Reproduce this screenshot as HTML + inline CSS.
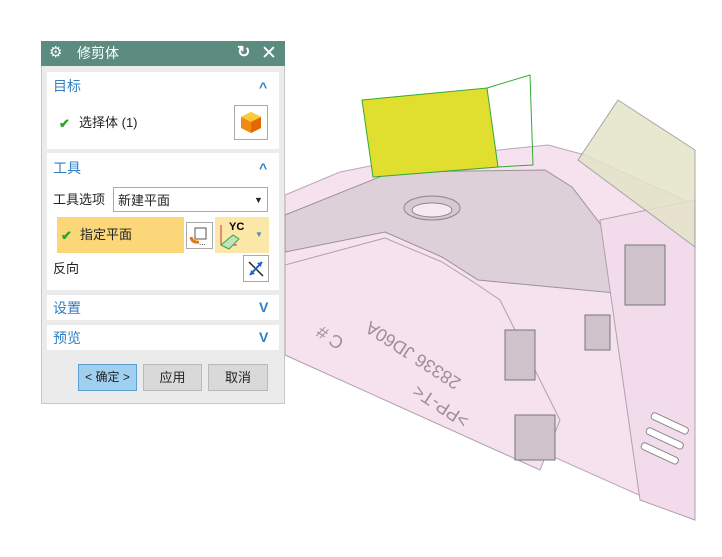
<!DOCTYPE html>
<html><head><meta charset="utf-8"><style>
body{margin:0;width:722px;height:557px;background:#fff;position:relative;overflow:hidden;font-family:"Liberation Sans","Noto Sans CJK SC",sans-serif;font-size:13px;line-height:1;color:#222}
.a{position:absolute}
.dlg{left:41px;top:41px;width:244px;height:363px;background:#ebebeb;border:1px solid #c8c8c8;box-sizing:border-box}
.title{left:41px;top:41px;width:244px;height:25px;background:#5c8b80;color:#fff}
.sec{background:#fff;left:47px;width:232px}
.hd{color:#2f7fc1;font-size:14px}
.car{color:#2f7fc1;font-weight:bold;font-size:14px}
.btn{background:#d9d9d9;border:1px solid #b9b9b9;text-align:center;line-height:25px;height:25px;box-sizing:border-box}
</style></head><body>
<svg class="a" style="left:0;top:0" width="722" height="557">
<polygon points="285,195 340,172 400,160 548,145 585,155 695,205 695,520 285,337" fill="#f6e2ef" stroke="#b8a8b4"/>
<polygon points="285,215 392,172 545,170 572,187 618,247 615,293 478,280 442,257 385,232 285,252" fill="#ddd0d8" stroke="#9c909a"/>
<polygon points="285,265 385,238 442,262 478,285 500,300 560,420 540,470 285,355" fill="#f6e2ef" stroke="#b0a0ac"/>
<polygon points="600,220 695,200 695,520 640,500" fill="#f2dceb" stroke="#b0a0ac"/>
<ellipse cx="432" cy="208" rx="28" ry="12" fill="#d8c8d2" stroke="#888"/>
<ellipse cx="432" cy="210" rx="20" ry="7" fill="#f8e8f2" stroke="#888"/>
<polygon points="618,100 695,150 695,247 578,160" fill="#e4e4c8" opacity=".85" stroke="#999"/>
<polygon points="362,100 487,88 498,167 373,177" fill="#e0de2e" stroke="#3a3"/>
<polyline points="487,88 530,75 533,165 498,167" fill="none" stroke="#3a3"/>
<rect x="625" y="245" width="40" height="60" fill="#cfc2cb" stroke="#777"/>
<rect x="505" y="330" width="30" height="50" fill="#cfc2cb" stroke="#777"/>
<rect x="585" y="315" width="25" height="35" fill="#cfc2cb" stroke="#777"/>
<rect x="515" y="415" width="40" height="45" fill="#cfc2cb" stroke="#777"/>
<g stroke="#888" fill="#fff"><rect x="650" y="420" width="40" height="7" rx="3" transform="rotate(25 670 423)"/><rect x="645" y="435" width="40" height="7" rx="3" transform="rotate(25 665 438)"/><rect x="640" y="450" width="40" height="7" rx="3" transform="rotate(25 660 453)"/></g>
<g fill="#9c8e98" font-size="18" font-family="Liberation Sans"><text transform="translate(462,380) rotate(213)">28336 JD60A</text><text transform="translate(470,418) rotate(213)">&gt;PP-T&lt;</text><text transform="translate(345,340) rotate(213)">C #</text></g>
</svg>
<div class="a dlg"></div>
<div class="a title"><span class="a" style="left:8px;top:4px;font-size:15px">⚙</span><span class="a" style="left:36px;top:5px;font-size:14px">修剪体</span><span class="a" style="left:196px;top:4px;font-size:16px;font-weight:bold">↻</span><span class="a" style="left:220px;top:3px;font-size:19px">✕</span></div>
<div class="a sec" style="top:72px;height:77px"><span class="a hd" style="left:6px;top:7px">目标</span><span class="a car" style="left:212px;top:8px">^</span><span class="a" style="left:12px;top:45px;color:#2aa52a;font-weight:bold">✔</span><span class="a" style="left:32px;top:44px">选择体 (1)</span>
<div class="a" style="left:187px;top:33px;width:34px;height:35px;border:1px solid #aaa;box-sizing:border-box;background:#fff"><svg width="32" height="33"><polygon points="16,6 26,11 26,22 16,27 6,22 6,11" fill="#f08a10"/><polygon points="16,6 26,11 16,16 6,11" fill="#ffc83a"/><polygon points="16,16 26,11 26,22 16,27" fill="#e06a00"/></svg></div></div>
<div class="a sec" style="top:153px;height:137px"><span class="a hd" style="left:6px;top:8px">工具</span><span class="a car" style="left:212px;top:8px">^</span>
<span class="a" style="left:6px;top:40px">工具选项</span><div class="a" style="left:66px;top:34px;width:155px;height:25px;border:1px solid #aaa;box-sizing:border-box"><span class="a" style="left:4px;top:6px">新建平面</span><span class="a" style="left:140px;top:8px;font-size:9px">▼</span></div>
<div class="a" style="left:10px;top:64px;width:127px;height:36px;background:#fbd77a"><span class="a" style="left:4px;top:12px;color:#2aa52a;font-weight:bold">✔</span><span class="a" style="left:23px;top:11px">指定平面</span></div>
<div class="a" style="left:139px;top:69px;width:27px;height:27px;border:1px solid #aaa;box-sizing:border-box;background:#fff"><svg width="25" height="25"><rect x="8" y="5" width="11" height="11" fill="#fff" stroke="#555"/><path d="M4 14 q1 6 8 5" stroke="#e07a10" stroke-width="3" fill="none"/><text x="12" y="22" font-size="8">...</text></svg></div>
<div class="a" style="left:168px;top:64px;width:54px;height:36px;background:#fbe7a8"><svg width="36" height="36"><path d="M6 8 V28 H22" stroke="#c33" fill="none"/><path d="M6 28 L18 18 L24 22 L14 32Z" fill="#bfe3bf" stroke="#3a3"/><text x="14" y="13" font-size="11" font-weight="bold" font-family="Liberation Sans">YC</text></svg><span class="a" style="left:40px;top:14px;font-size:8px;color:#5588aa">▼</span></div>
<span class="a" style="left:6px;top:109px">反向</span>
<div class="a" style="left:196px;top:102px;width:26px;height:27px;border:1px solid #aaa;box-sizing:border-box;background:#fff"><svg width="24" height="25"><path d="M5 6 L19 20" stroke="#222" stroke-width="1.5"/><path d="M18 6 L6 19" stroke="#1f5fcf" stroke-width="2"/><path d="M18 6 l-5 1 l4 4z M6 19 l5 -1 l-4 -4z" fill="#1f5fcf"/></svg></div></div>
<div class="a sec" style="top:295px;height:25px"><span class="a hd" style="left:6px;top:6px">设置</span><span class="a car" style="left:212px;top:5px">V</span></div>
<div class="a sec" style="top:325px;height:25px"><span class="a hd" style="left:6px;top:6px">预览</span><span class="a car" style="left:212px;top:5px">V</span></div>
<div class="a btn" style="left:78px;top:364px;width:59px;height:27px;background:#9fd0ef;border-color:#5b9fd0;font-size:12px;line-height:25px">&lt; 确定 &gt;</div>
<div class="a btn" style="left:143px;top:364px;width:59px;height:27px">应用</div>
<div class="a btn" style="left:208px;top:364px;width:60px;height:27px">取消</div>
</body></html>
